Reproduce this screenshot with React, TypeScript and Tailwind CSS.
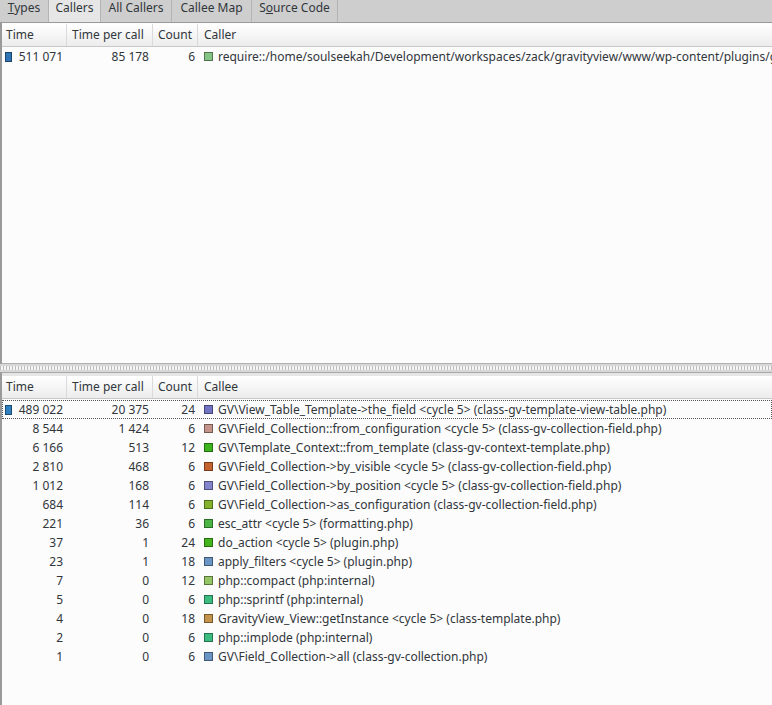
import React from 'react'

type Row = {
  time: string
  perCall: string
  count: string
  name: string
  color: string
}

const callees: Row[] = [
  { time: '489 022', perCall: '20 375', count: '24', name: 'GV\\View_Table_Template->the_field <cycle 5> (class-gv-template-view-table.php)', color: '#7373c4' },
  { time: '8 544', perCall: '1 424', count: '6', name: 'GV\\Field_Collection::from_configuration <cycle 5> (class-gv-collection-field.php)', color: '#c4948a' },
  { time: '6 166', perCall: '513', count: '12', name: 'GV\\Template_Context::from_template (class-gv-context-template.php)', color: '#3cb41e' },
  { time: '2 810', perCall: '468', count: '6', name: 'GV\\Field_Collection->by_visible <cycle 5> (class-gv-collection-field.php)', color: '#c4622e' },
  { time: '1 012', perCall: '168', count: '6', name: 'GV\\Field_Collection->by_position <cycle 5> (class-gv-collection-field.php)', color: '#8484cc' },
  { time: '684', perCall: '114', count: '6', name: 'GV\\Field_Collection->as_configuration (class-gv-collection-field.php)', color: '#84b42e' },
  { time: '221', perCall: '36', count: '6', name: 'esc_attr <cycle 5> (formatting.php)', color: '#4cb444' },
  { time: '37', perCall: '1', count: '24', name: 'do_action <cycle 5> (plugin.php)', color: '#44b41c' },
  { time: '23', perCall: '1', count: '18', name: 'apply_filters <cycle 5> (plugin.php)', color: '#6a94c4' },
  { time: '7', perCall: '0', count: '12', name: 'php::compact (php:internal)', color: '#94c464' },
  { time: '5', perCall: '0', count: '6', name: 'php::sprintf (php:internal)', color: '#3cbc80' },
  { time: '4', perCall: '0', count: '18', name: 'GravityView_View::getInstance <cycle 5> (class-template.php)', color: '#c4944c' },
  { time: '2', perCall: '0', count: '6', name: 'php::implode (php:internal)', color: '#3cbc80' },
  { time: '1', perCall: '0', count: '6', name: 'GV\\Field_Collection->all (class-gv-collection.php)', color: '#6a94c4' },
]

const tabs = [
  { label: 'Types', u: 0, w: 'w-[49px]' },
  { label: 'Callers', u: -1, w: 'w-[52px]' },
  { label: 'All Callers', u: -1, w: 'w-[71px]' },
  { label: 'Callee Map', u: -1, w: 'w-[80px]' },
  { label: 'Source Code', u: 1, w: 'w-[86px]' },
]

const cols = 'grid grid-cols-[65px_86px_45px_1fr]'

function Swatch({ color }: { color: string }) {
  return (
    <span
      className="inline-block w-[9px] h-[9px] border border-black/40 shrink-0"
      style={{ backgroundColor: color }}
    />
  )
}

function Header({ last }: { last: string }) {
  return (
    <div className={`${cols} h-[23px] bg-gradient-to-b from-white to-[#ececec] border-b border-[#c8c8c8] shrink-0`}>
      <div className="pl-[4px] flex items-center border-r border-[#dadada]">Time</div>
      <div className="pl-[5px] flex items-center border-r border-[#dadada]">Time per call</div>
      <div className="pl-[5px] flex items-center border-r border-[#dadada]">Count</div>
      <div className="pl-[6px] flex items-center">{last}</div>
    </div>
  )
}

function DataRow({ row, first, barColor }: { row: Row; first?: boolean; barColor?: string }) {
  return (
    <div
      className={`${cols} h-[19px] items-center whitespace-nowrap ${
        first ? 'outline outline-1 outline-dotted outline-[#555] -outline-offset-1' : ''
      }`}
    >
      <div className="flex items-center pr-[4px] pl-[3px]">
        {barColor ? (
          <span className="inline-block w-[7px] h-[10px] border border-black/40" style={{ backgroundColor: barColor }} />
        ) : null}
        <span className="ml-auto">{row.time}</span>
      </div>
      <div className="text-right pr-[4px]">{row.perCall}</div>
      <div className="text-right pr-[3px]">{row.count}</div>
      <div className="flex items-center gap-[5px] pl-[6px] overflow-hidden">
        <Swatch color={row.color} />
        <span>{row.name}</span>
      </div>
    </div>
  )
}

export default function App() {
  return (
    <div
      className="w-[772px] h-[705px] overflow-hidden flex flex-col bg-[#fcfcfc] text-[12px] text-[#31363b]"
      style={{ fontFamily: '"Noto Sans", "Open Sans", sans-serif' }}
    >
      {/* Tabs */}
      <div className="h-[23px] bg-[#cecece] flex border-b border-[#9a9a9a] shrink-0">
        {tabs.map((t, i) => (
          <div
            key={t.label}
            className={`${t.w} flex items-center justify-center pb-[6px] border-r border-[#b4b4b4] ${
              i === 1 ? 'bg-[#e6e6e6]' : ''
            }`}
          >
            {t.u >= 0 ? (
              <span>
                {t.label.slice(0, t.u)}
                <span className="underline">{t.label[t.u]}</span>
                {t.label.slice(t.u + 1)}
              </span>
            ) : (
              t.label
            )}
          </div>
        ))}
      </div>

      {/* Callers pane */}
      <div className="h-[341px] border-l-2 border-[#9a9a9a] border-b border-b-[#b0b0b0] bg-[#fcfcfc] flex flex-col overflow-hidden shrink-0">
        <div className="pt-[1px]">
          <Header last="Caller" />
        </div>
        <div>
          <DataRow
            row={{
              time: '511 071',
              perCall: '85 178',
              count: '6',
              name: 'require::/home/soulseekah/Development/workspaces/zack/gravityview/www/wp-content/plugins/gravityview/future/includes/class-gv-template.php',
              color: '#84c484',
            }}
            barColor="#2f74b4"
          />
        </div>
      </div>

      {/* Splitter */}
      <div className="h-[8px] bg-[#d8d8d8] flex flex-col justify-center shrink-0">
        <div className="h-[4px] bg-[repeating-linear-gradient(90deg,#bdbdbd_0px,#bdbdbd_1px,#f4f4f4_1px,#f4f4f4_3px)]" />
      </div>

      {/* Callees pane */}
      <div className="flex-1 border-l-2 border-[#9a9a9a] border-t border-t-[#a8a8a8] bg-[#fcfcfc] flex flex-col overflow-hidden">
        <div className="pt-[3px] bg-gradient-to-b from-[#e4e4e4] to-white">
          <Header last="Callee" />
        </div>
        <div className="pt-[1px]">
          {callees.map((r, i) => (
            <DataRow key={i} row={r} first={i === 0} barColor={i === 0 ? '#2f80c0' : undefined} />
          ))}
        </div>
      </div>
    </div>
  )
}
